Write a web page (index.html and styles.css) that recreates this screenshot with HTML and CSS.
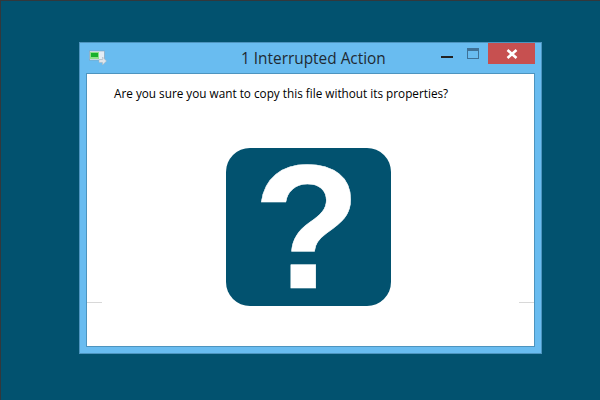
FILE: index.html
```html
<!DOCTYPE html>
<html lang="en">
  <head>
    <meta charset="UTF-8" />
    <title>1 Interrupted Action</title>
    <link rel="stylesheet" href="styles.css">
  </head>
  <body>
    <div class="desktop">
      <div class="window">
        <div class="titlebar">
          <svg class="app-icon" width="18" height="17" viewBox="0 0 18 17">
            <rect x="0.5" y="2" width="15" height="9" fill="#e4edf5" stroke="#7f9db5" stroke-width="0.6" />
            <rect x="1" y="3" width="9" height="7" fill="#8ee08a" />
            <rect x="2" y="4" width="7" height="4" fill="#18b02c" />
            <path d="M10 10.5h3.5V8l4 4-4 4v-2.500h-3.500z" fill="#dfe5ea" stroke="#a4b2bd" stroke-width="0.5" />
          </svg>
          <div class="title">1 Interrupted Action</div>
          <div class="min-btn"><span class="min-bar"></span></div>
          <div class="max-btn"><span class="max-box"></span></div>
          <div class="close-btn">
            <svg width="12" height="10" viewBox="0 0 12 10">
              <path d="M1.500 1l9 8M10.500 1l-9 8" stroke="#fff" stroke-width="2.600" />
            </svg>
          </div>
        </div>
        <div class="content">
          <p class="message">Are you sure you want to copy this file without its properties?</p>
          <div class="help-icon">?</div>
          <span class="tick tick-left"></span>
          <span class="tick tick-right"></span>
        </div>
      </div>
    </div>
  </body>
</html>
```

FILE: styles.css
```css
html, body {
  margin: 0;
  padding: 0;
}
.desktop {
  box-sizing: border-box;
  width: 600px;
  height: 400px;
  padding: 41px 0 0 78px;
  background: #02526f;
  border: 1px solid #33383c;
  border-width: 1px 0 0 1px;
}
.window {
  box-sizing: border-box;
  width: 463px;
  height: 312px;
  padding: 0 6px 6px 6px;
  background: #69bcf0;
  border: 1px solid #4d94bf;
  display: flex;
  flex-direction: column;
}
.titlebar {
  height: 30px;
  display: flex;
  align-items: flex-start;
  flex-shrink: 0;
}
.app-icon {
  margin: 6px 0 0 3px;
}
.title {
  flex: 1;
  padding-top: 6px;
  padding-left: 134px;
  font-family: "Open Sans", sans-serif;
  font-size: 15.4px;
  line-height: 20px;
  color: #1f2a33;
  text-align: left;
}
.min-btn {
  width: 28px;
  height: 21px;
  position: relative;
}
.min-bar {
  display: block;
  width: 12px;
  height: 2px;
  margin: 13px 0 0 3px;
  background: #222;
}
.max-btn {
  width: 22px;
  height: 21px;
}
.max-box {
  display: block;
  box-sizing: border-box;
  width: 12px;
  height: 11px;
  margin: 5px 0 0 1px;
  border: 1px solid #3f7196;
  border-top-width: 3px;
}
.close-btn {
  width: 47px;
  height: 21px;
  background: #c75050;
  display: flex;
  align-items: center;
  justify-content: center;
}
.content {
  flex: 1;
  background: #fff;
  border: 1px solid #4d94bf;
  position: relative;
  display: flex;
  flex-direction: column;
  align-items: center;
}
.message {
  align-self: flex-start;
  margin: 11px 0 0 27px;
  font-family: "Open Sans", sans-serif;
  font-size: 11.75px;
  line-height: 16px;
  color: #000;
}
.help-icon {
  width: 165px;
  height: 158px;
  margin: 47px 0 0 -4px;
  padding-right: 3px;
  box-sizing: border-box;
  background: #02526f;
  border-radius: 24px;
  color: #fff;
  font-family: "Liberation Sans", sans-serif;
  font-weight: bold;
  font-size: 176px;
  line-height: 158px;
  text-align: center;
  -webkit-text-stroke: 0.5px #fff;
}
.tick {
  position: absolute;
  top: 228px;
  width: 15px;
  height: 1px;
  background: #d8d8d8;
}
.tick-left {
  left: 0;
}
.tick-right {
  right: 0;
}
```
